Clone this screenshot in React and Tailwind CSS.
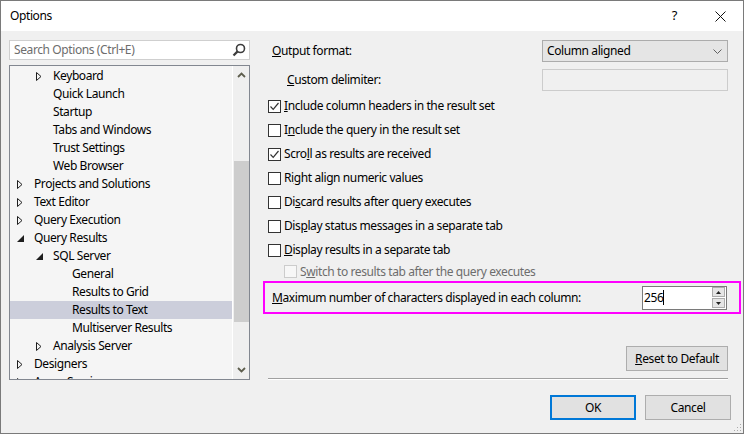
import React from 'react';

const FONT = { fontFamily: '"Noto Sans", "Liberation Sans", sans-serif' };

// tree rows: [label, level, arrow] arrow: 'c' collapsed, 'e' expanded, null none
const treeRows = [
  ['Keyboard', 1, 'c'],
  ['Quick Launch', 1, null],
  ['Startup', 1, null],
  ['Tabs and Windows', 1, null],
  ['Trust Settings', 1, null],
  ['Web Browser', 1, null],
  ['Projects and Solutions', 0, 'c'],
  ['Text Editor', 0, 'c'],
  ['Query Execution', 0, 'c'],
  ['Query Results', 0, 'e'],
  ['SQL Server', 1, 'e'],
  ['General', 2, null],
  ['Results to Grid', 2, null],
  ['Results to Text', 2, null, true],
  ['Multiserver Results', 2, null],
  ['Analysis Server', 1, 'c'],
  ['Designers', 0, 'c'],
  ['Azure Services', 0, 'c'],
];

const checks = [
  { pre: '', key: 'I', post: 'nclude column headers in the result set', on: true },
  { pre: 'I', key: 'n', post: 'clude the query in the result set', on: false },
  { pre: 'Scro', key: 'l', post: 'l as results are received', on: true },
  { pre: 'Ri', key: 'g', post: 'ht align numeric values', on: false },
  { pre: 'Di', key: 's', post: 'card results after query executes', on: false },
  { pre: 'Dis', key: 'p', post: 'lay status messages in a separate tab', on: false },
  { pre: '', key: 'D', post: 'isplay results in a separate tab', on: false },
];

function Arrow({ type }) {
  if (type === 'c') {
    return (
      <svg width="6" height="9" viewBox="0 0 6 9">
        <path d="M0.5 0.5 L5 4.5 L0.5 8.5 Z" fill="none" stroke="#1e1e1e" strokeWidth="1" />
      </svg>
    );
  }
  if (type === 'e') {
    return (
      <svg width="7" height="7" viewBox="0 0 7 7">
        <path d="M7 0 L7 7 L0 7 Z" fill="#1e1e1e" />
      </svg>
    );
  }
  return null;
}

function Checkbox({ on, disabled }) {
  return (
    <div
      className={`w-[13px] h-[13px] border flex items-center justify-center shrink-0 ${
        disabled ? 'border-[#cccccc] bg-[#f7f7f7]' : 'border-[#333333] bg-white'
      }`}
    >
      {on && (
        <svg width="11" height="11" viewBox="0 0 11 11">
          <path d="M1.5 5.5 L4.2 8.3 L9.5 2" fill="none" stroke="#333333" strokeWidth="1.2" />
        </svg>
      )}
    </div>
  );
}

export default function App() {
  return (
    <div
      className="w-[744px] h-[434px] border border-[#7a7a7a] bg-[#f0f0f0] flex flex-col text-[12px] tracking-[-0.4px] text-black overflow-hidden"
      style={FONT}
    >
      {/* title bar */}
      <div className="h-[30px] bg-white flex items-center shrink-0">
        <span className="ml-[9px] text-[12px]">Options</span>
        <span className="ml-auto mr-[38px] text-[13px]">?</span>
        <svg className="mr-[17px]" width="11" height="11" viewBox="0 0 11 11">
          <path d="M0.5 0.5 L10.5 10.5 M10.5 0.5 L0.5 10.5" stroke="#111" strokeWidth="1" />
        </svg>
      </div>

      <div className="flex flex-1 relative">
        {/* left column */}
        <div className="ml-[8px] w-[241px] pt-[9px] flex flex-col">
          <div className="h-[20px] bg-white border border-[#cfcfcf] flex items-center pl-[4px] pr-[3px]">
            <span className="text-[#6d6d6d]">Search Options (Ctrl+E)</span>
            <svg className="ml-auto" width="14" height="14" viewBox="0 0 14 14">
              <circle cx="8.5" cy="5.5" r="4" fill="none" stroke="#3c3c3c" strokeWidth="1.6" />
              <path d="M5.6 8.4 L1.5 12.5" stroke="#3c3c3c" strokeWidth="2.2" />
            </svg>
          </div>
          <div className="mt-[5px] h-[315px] border border-[#828790] bg-[#f5f5f5] flex overflow-hidden">
            <div className="flex-1 pt-[1px] overflow-hidden">
              {treeRows.map(([label, level, arrow, sel]) => (
                <div
                  key={label}
                  className={`h-[18px] flex items-center ${sel ? 'bg-[#cccedb]' : ''}`}
                >
                  <div
                    className="flex items-center justify-center w-[10px] shrink-0"
                    style={{ marginLeft: 5 + level * 19 }}
                  >
                    <Arrow type={arrow} />
                  </div>
                  <span className="ml-[9px] whitespace-nowrap">{label}</span>
                </div>
              ))}
            </div>
            <div className="w-[17px] shrink-0 border-l border-white bg-[#efefef] flex flex-col items-center">
              <svg className="mt-[6px]" width="9" height="6" viewBox="0 0 9 6">
                <path d="M1 5 L4.5 1.5 L8 5" fill="none" stroke="#5e5e4e" strokeWidth="1.8" />
              </svg>
              <div className="mt-[83px] w-[15px] h-[161px] bg-[#cdcdcd]" />
              <svg className="mt-auto mb-[6px]" width="9" height="6" viewBox="0 0 9 6">
                <path d="M1 1 L4.5 4.5 L8 1" fill="none" stroke="#5e5e4e" strokeWidth="1.8" />
              </svg>
            </div>
          </div>
        </div>

        {/* right column */}
        <div className="ml-[13px] w-[478px] pt-[9px] flex flex-col">
          <div className="h-[22px] flex items-center">
            <span className="ml-[9px]">
              <span className="underline">O</span>utput format:
            </span>
            <div className="ml-auto mr-[13px] w-[186px] h-[22px] bg-[#e5e5e5] border border-[#acacac] flex items-center pl-[4px] pr-[5px]">
              <span>Column aligned</span>
              <svg className="ml-auto" width="9" height="5" viewBox="0 0 9 5">
                <path d="M0.5 0.5 L4.5 4.5 L8.5 0.5" fill="none" stroke="#606060" strokeWidth="1" />
              </svg>
            </div>
          </div>
          <div className="mt-[7px] h-[22px] flex items-center">
            <span className="ml-[24px]">
              <span className="underline">C</span>ustom delimiter:
            </span>
            <div className="ml-auto mr-[13px] w-[186px] h-[22px] bg-[#f0f0f0] border border-[#cccccc]" />
          </div>

          <div className="mt-[3px]">
            {checks.map((c) => (
              <div key={c.post} className="h-[24px] flex items-center pl-[5px]">
                <Checkbox on={c.on} />
                <span className="ml-[3px] whitespace-nowrap">
                  {c.pre}
                  <span className="underline">{c.key}</span>
                  {c.post}
                </span>
              </div>
            ))}
          </div>
          <div className="h-[19px] flex items-center pl-[21px] text-[#6d6d6d]">
            <Checkbox disabled />
            <span className="ml-[3px] whitespace-nowrap">
              S<span className="underline">w</span>itch to results tab after the query executes
            </span>
          </div>

          <div className="h-[33px] border-2 border-[#ff00ff] flex items-center">
            <span className="ml-[7px] whitespace-nowrap">
              <span className="underline">M</span>aximum number of characters displayed in each column:
            </span>
            <div className="ml-auto mr-[12px] w-[85px] h-[24px] bg-white border border-[#7a7a7a] flex items-center pl-[1px] pr-[1px]">
              <span className="leading-none">256</span>
              <span className="w-[1px] h-[15px] bg-black" />
              <div className="ml-auto flex flex-col gap-[1px]">
                <div className="w-[13px] h-[10px] bg-[#e5e5e5] border border-[#acacac] flex items-center justify-center">
                  <svg width="5" height="3" viewBox="0 0 5 3"><path d="M0 3 L2.5 0 L5 3 Z" fill="#222" /></svg>
                </div>
                <div className="w-[13px] h-[10px] bg-[#e5e5e5] border border-[#acacac] flex items-center justify-center">
                  <svg width="5" height="3" viewBox="0 0 5 3"><path d="M0 0 L2.5 3 L5 0 Z" fill="#222" /></svg>
                </div>
              </div>
            </div>
          </div>

          <div className="mt-[32px] flex justify-end mr-[13px]">
            <div className="w-[102px] h-[25px] bg-[#e1e1e1] border border-[#adadad] flex items-center justify-center">
              <span>
                <span className="underline">R</span>eset to Default
              </span>
            </div>
          </div>
          <div className="mt-[7px] ml-[5px] mr-[13px] h-[2px] border-t border-[#a0a0a0] border-b border-b-white" />
          <div className="mt-[15px] flex justify-end gap-[9px] mr-[10px]">
            <div className="w-[86px] h-[25px] bg-[#e1e1e1] border-2 border-[#0078d7] flex items-center justify-center">
              OK
            </div>
            <div className="w-[86px] h-[25px] bg-[#e1e1e1] border border-[#adadad] flex items-center justify-center">
              Cancel
            </div>
          </div>
        </div>

        {/* resize grip */}
        <svg className="absolute right-[1px] bottom-[1px]" width="10" height="10" viewBox="0 0 10 10">
          <rect x="8" y="2" width="1" height="1" fill="#aaa" />
          <rect x="5" y="5" width="1" height="1" fill="#aaa" />
          <rect x="8" y="5" width="1" height="1" fill="#aaa" />
          <rect x="2" y="8" width="1" height="1" fill="#aaa" />
          <rect x="5" y="8" width="1" height="1" fill="#aaa" />
          <rect x="8" y="8" width="1" height="1" fill="#aaa" />
        </svg>
      </div>
    </div>
  );
}
